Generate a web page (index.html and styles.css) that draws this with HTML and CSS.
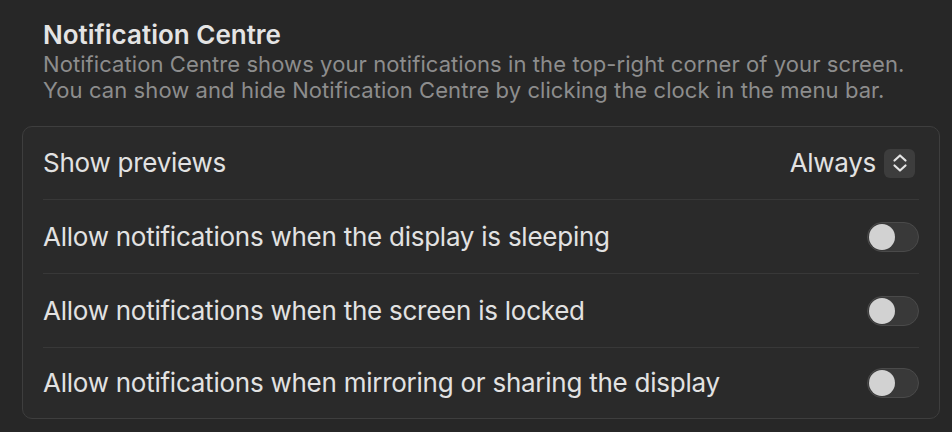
FILE: index.html
```html
<!DOCTYPE html>
<html lang="en">
<head>
    <meta charset="UTF-8">
    <meta name="viewport" content="width=device-width, initial-scale=1.0">
    <title>Notifications</title>
    <link rel="stylesheet" href="styles.css">
</head>
<body>
    <div class="page">
        <!-- Section header -->
        <div class="section-head">
            <h2>Notification Centre</h2>
            <p>Notification Centre shows your notifications in the top-right corner of your screen.<br>
            You can show and hide Notification Centre by clicking the clock in the menu bar.</p>
        </div>

        <div class="card">
            <div class="row">
                <span class="label">Show previews</span>
                <div class="popup">
                    <span>Always</span>
                    <span class="stepper">
                        <svg width="16" height="22" viewBox="0 0 16 22">
                            <path d="M2.5 8.5 L8 3.5 L13.5 8.5" fill="none" stroke="#e4e4e4" stroke-width="2.2" stroke-linecap="round" stroke-linejoin="round"/>
                            <path d="M2.5 13.5 L8 18.5 L13.5 13.5" fill="none" stroke="#e4e4e4" stroke-width="2.2" stroke-linecap="round" stroke-linejoin="round"/>
                        </svg>
                    </span>
                </div>
            </div>
            <div class="row">
                <span class="label">Allow notifications when the display is sleeping</span>
                <span class="toggle"><span class="knob"></span></span>
            </div>
            <div class="row">
                <span class="label">Allow notifications when the screen is locked</span>
                <span class="toggle"><span class="knob"></span></span>
            </div>
            <div class="row">
                <span class="label">Allow notifications when mirroring or sharing the display</span>
                <span class="toggle"><span class="knob"></span></span>
            </div>
        </div>
    </div>
</body>
</html>
```

FILE: styles.css
```css
/* Dark settings pane */
body {
    margin: 0;
    background-color: #272727;
    font-family: Inter, "Noto Sans", sans-serif;
    color: #e0e0e0;
}

.page {
    padding: 19px 12px 0 22px;
}

.section-head {
    padding-left: 21px;
}

.section-head h2 {
    margin: 0;
    font-size: 26px;
    font-weight: 600;
    line-height: 32px;
    color: #e4e4e4;
}

.section-head p {
    margin: 0;
    font-size: 22px;
    line-height: 26px;
    letter-spacing: 0.08px;
    color: #8d8d8d;
}

.card {
    margin-top: 23px;
    background: #2a2a2a;
    border: 1px solid #3e3e3e;
    border-radius: 10px;
    padding: 0 20px;
}

.row {
    display: flex;
    align-items: center;
    justify-content: space-between;
    height: 73px;
    border-bottom: 1px solid #383838;
}

.row:first-child {
    height: 72px;
}

.row:last-child {
    border-bottom: none;
    height: 70px;
}

.label {
    font-size: 26px;
    line-height: 32px;
    letter-spacing: -0.25px;
    color: #e2e2e2;
}

.popup {
    display: flex;
    align-items: center;
    gap: 8px;
    font-size: 26px;
    line-height: 32px;
    letter-spacing: -0.3px;
    color: #e2e2e2;
}

.stepper {
    display: flex;
    align-items: center;
    justify-content: center;
    width: 31px;
    height: 29px;
    border-radius: 6px;
    background: #3d3d3d;
    margin-right: 4px;
}

.toggle {
    position: relative;
    width: 50px;
    height: 28px;
    border-radius: 15px;
    background: #393939;
    border: 1px solid #4a4a4a;
}

.knob {
    position: absolute;
    left: 1px;
    top: 1px;
    width: 26px;
    height: 26px;
    border-radius: 50%;
    background: #d2d2d2;
}
```
